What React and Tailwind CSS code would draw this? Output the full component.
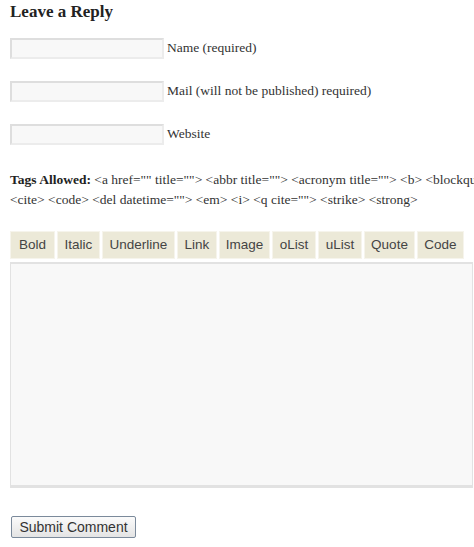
export default function App() {
  const btns = [
    ["Bold", "w-[45px]"],
    ["Italic", "w-[43px]"],
    ["Underline", "w-[73px]"],
    ["Link", "w-[40px]"],
    ["Image", "w-[51px]"],
    ["oList", "w-[44px]"],
    ["uList", "w-[44px]"],
    ["Quote", "w-[51px]"],
    ["Code", "w-[47px]"],
  ];
  const serif = { fontFamily: '"Liberation Serif", "DejaVu Serif", serif' };
  return (
    <div className="w-[474px] h-[547px] overflow-hidden bg-white text-[#222]" style={serif}>
      <div className="pl-[10px] pt-[1px] w-[520px]">
        <h3 className="text-[17px] font-bold leading-[20px] mt-[1px] text-[#222]">Leave a Reply</h3>
        <div className="mt-[16px] flex flex-col gap-[22px]">
          {["Name (required)", "Mail (will not be published) required)", "Website"].map((l) => (
            <div key={l} className="flex items-center h-[21px]">
              <div className="w-[154px] h-[21px] border-2 border-[#dedede] border-r-[#ececec] border-b-[#ececec] bg-[#f8f8f8]" />
              <span className="ml-[3px] text-[13.5px] text-[#333]">{l}</span>
            </div>
          ))}
        </div>
        <div className="mt-[25px] text-[13.5px] leading-[20px] text-[#333] whitespace-nowrap">
          <div>
            <b className="text-[#222]">Tags Allowed:</b> {'<a href="" title=""> <abbr title=""> <acronym title=""> <b> <blockquote cite="">'}
          </div>
          <div>{'<cite> <code> <del datetime=""> <em> <i> <q cite=""> <strike> <strong>'}</div>
        </div>
        <div className="mt-[21px] flex gap-[2px]" style={{ fontFamily: '"Liberation Sans", Arial, sans-serif' }}>
          {btns.map(([t, w]) => (
            <div
              key={t}
              className={`${w} h-[28px] flex items-center justify-center bg-[#ece9d8] border border-[#f6f4ec] text-[13.5px] text-[#444]`}
            >
              {t}
            </div>
          ))}
        </div>
        <div className="mt-[3px] w-[463px] h-[226px] bg-[#f8f8f8] border-t-2 border-l border-b-[3px] border-r border-[#e2e2e2]" />
        <button
          className="mt-[28px] ml-[1px] w-[125px] h-[22px] rounded-[2px] border border-[#7b8a9b] bg-gradient-to-b from-[#fbfbfb] to-[#e4e4e4] text-[14px] text-[#333] leading-none"
          style={{ fontFamily: '"Liberation Sans", Arial, sans-serif' }}
        >
          Submit Comment
        </button>
      </div>
    </div>
  );
}
